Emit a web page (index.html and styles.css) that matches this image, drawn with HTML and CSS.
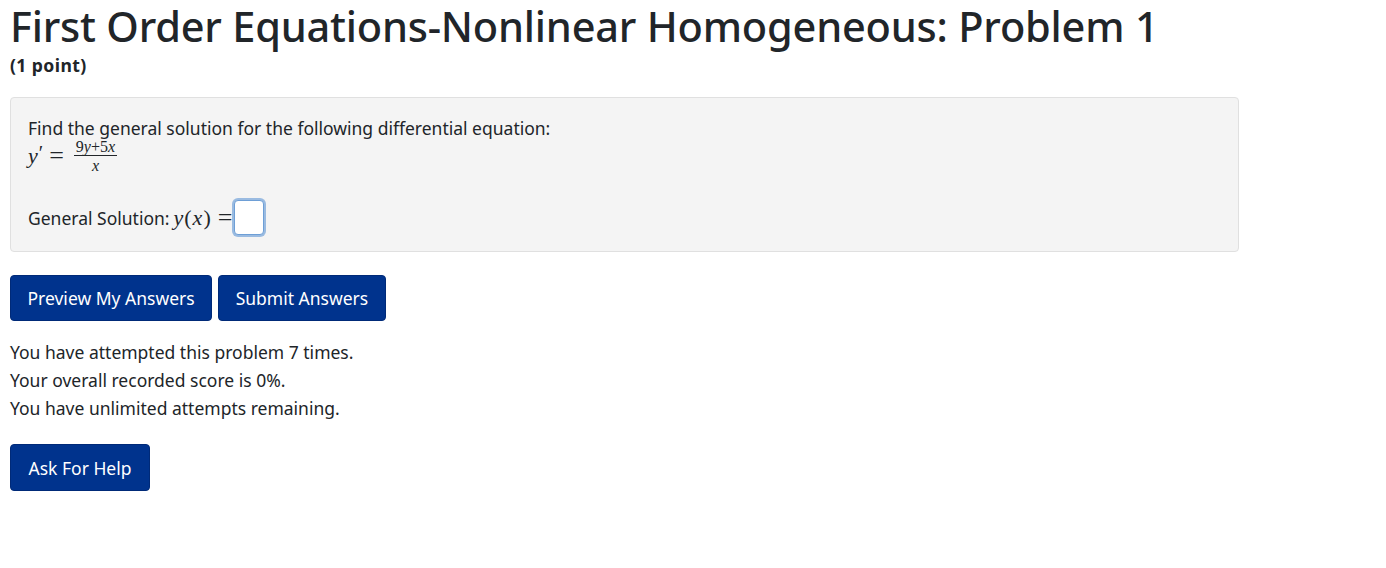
FILE: index.html
```html
<!DOCTYPE html>
<html>
<head>
<meta charset="utf-8">
<link rel="stylesheet" href="styles.css">
</head>
<body>
<div class="page">
  <h1 class="title">First Order Equations-Nonlinear Homogeneous: Problem 1</h1>
  <div class="points">(1 point)</div>
  <div class="card">
    <div class="prompt">Find the general solution for the following differential equation:</div>
    <div class="eq">
      <span class="m">y</span><span class="prime">′</span>
      <span class="op">=</span>
      <span class="frac">
        <span class="num"><span class="mn">9</span><span class="m">y</span><span class="mn">+5</span><span class="m">x</span></span>
        <span class="den"><span class="m">x</span></span>
      </span>
    </div>
    <div class="solution">
      <span class="label">General Solution:</span>
      <span class="m big">y</span><span class="paren">(</span><span class="m big">x</span><span class="paren">)</span>
      <span class="op2">=</span>
      <span class="answer"></span>
    </div>
  </div>
  <div class="buttons">
    <button class="btn">Preview My Answers</button>
    <button class="btn">Submit Answers</button>
  </div>
  <div class="status">
    <div>You have attempted this problem 7 times.</div>
    <div>Your overall recorded score is 0%.</div>
    <div>You have unlimited attempts remaining.</div>
  </div>
  <button class="btn help">Ask For Help</button>
</div>
</body>
</html>
```
FILE: styles.css
```css
body {
  margin: 0;
  background: #fff;
  color: #212529;
  font-family: "Noto Sans", "Open Sans", sans-serif;
}
.page {
  padding: 1px 10px 0;
}
.title {
  margin: 0;
  font-size: 41.5px;
  line-height: 50px;
  font-weight: 500;
  letter-spacing: -0.2px;
}
.points {
  margin-top: 3px;
  font-weight: 700;
  font-size: 17.6px;
  letter-spacing: 0.4px;
  line-height: 22px;
}
.card {
  margin-top: 21px;
  width: 1229px;
  box-sizing: border-box;
  background: #f4f4f4;
  border: 1px solid #e0e0e0;
  border-radius: 4px;
  padding: 18px 17px 14px;
}
.prompt {
  line-height: 24px;
  font-size: 17.5px;
}
.m {
  font-family: "Liberation Serif", "DejaVu Serif", serif;
  font-style: italic;
}
.mn {
  font-family: "Liberation Serif", "DejaVu Serif", serif;
}
.eq {
  display: flex;
  align-items: center;
  height: 32px;
  font-size: 22px;
  margin-bottom: 26px;
}
.prime {
  font-family: "Liberation Serif", serif;
  font-size: 20px;
  margin-left: 1px;
  align-self: flex-start;
  margin-top: 2px;
}
.op {
  font-family: "Liberation Serif", serif;
  font-size: 26px;
  margin: 0 10px 0 6px;
}
.frac {
  display: inline-flex;
  flex-direction: column;
  align-items: center;
  font-size: 16px;
  line-height: 14px;
}
.num {
  padding: 0 2px 1px;
  border-bottom: 1px solid #212529;
}
.den {
  padding-top: 2px;
}
.solution {
  display: flex;
  align-items: center;
  height: 39px;
}
.label {
  margin-right: 4px;
  font-size: 17.5px;
}
.big {
  font-size: 22px;
}
.paren {
  font-family: "Liberation Serif", serif;
  font-size: 22px;
  margin: 0 1px;
}
.op2 {
  font-family: "Liberation Serif", serif;
  font-size: 26px;
  margin-left: 6px;
}
.answer {
  display: inline-block;
  width: 28px;
  height: 33px;
  background: #fff;
  border: 1px solid #6e9fd6;
  border-radius: 4px;
  box-shadow: 0 0 0 2px rgba(80, 140, 210, 0.55);
  margin-left: 2px;
}
.buttons {
  display: flex;
  gap: 6px;
  margin-top: 23px;
}
.btn {
  font-family: "Noto Sans", "Open Sans", sans-serif;
  font-size: 17.5px;
  color: #fff;
  background: #00338d;
  border: 1px solid #002a78;
  border-radius: 4px;
  height: 46px;
  padding: 0 16.5px;
  line-height: 24px;
}
.status {
  margin-top: 17px;
  font-size: 17.5px;
  line-height: 28px;
}
.help {
  margin-top: 22px;
  height: 47px;
  padding: 0 17.5px;
}
```
